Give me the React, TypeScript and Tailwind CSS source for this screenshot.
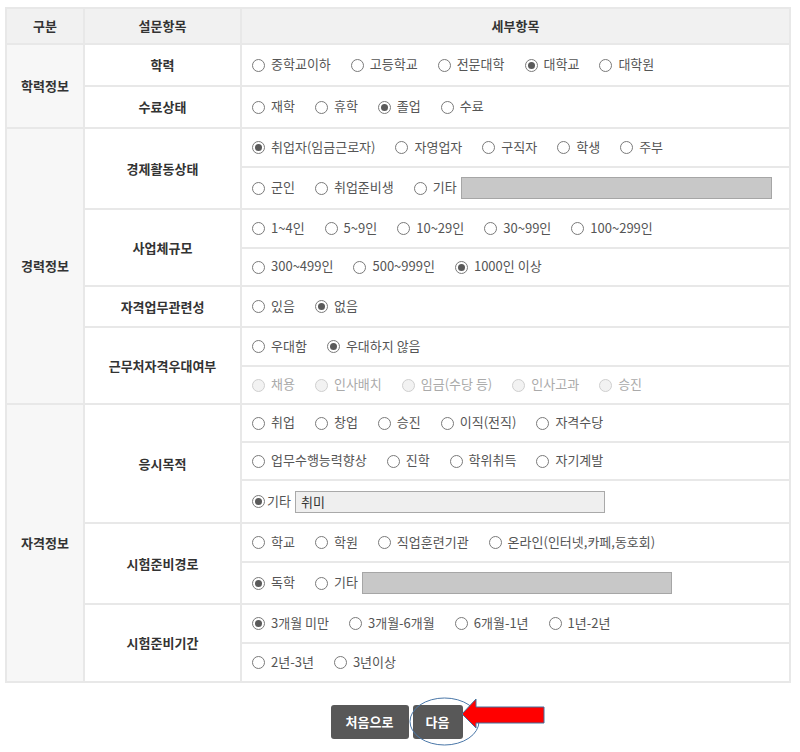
import React from "react";

type Opt = { l: string; c?: boolean; d?: boolean; tight?: boolean };

function Radio({ c, d }: { c?: boolean; d?: boolean }) {
  return (
    <span
      className={`relative inline-flex h-[13px] w-[13px] shrink-0 items-center justify-center rounded-full border ${
        d ? "border-[#cfcfcf] bg-[#f2f2f2]" : "border-[#7a7a7a] bg-white"
      }`}
    >
      {c && <span className="h-[7px] w-[7px] rounded-full bg-[#5a5a5a]" />}
    </span>
  );
}

function Option({ l, c, d, tight }: Opt) {
  return (
    <span className={`inline-flex items-center ${tight ? "gap-[2px]" : "gap-[6px]"}`}>
      <Radio c={c} d={d} />
      <span className={`leading-none -mt-[3px] ${d ? "text-[#aaaaaa]" : "text-[#555555]"}`}>{l}</span>
    </span>
  );
}

function Line({ opts, children }: { opts: Opt[]; children?: React.ReactNode }) {
  return (
    <div className="flex items-center gap-x-[20px]">
      {opts.map((o) => (
        <Option key={o.l} {...o} />
      ))}
      {children}
    </div>
  );
}

const td = "border-2 border-[#e8e8e8]";
const lab = `${td} text-center font-bold text-[#333333] bg-white`;
const grp = `${td} text-center font-bold text-[#333333] bg-[#f7f7f7]`;
const opt = `${td} pl-[10px] bg-white`;

export default function App() {
  return (
    <div
      className="relative h-[752px] w-[800px] bg-white text-[13px]"
      style={{ fontFamily: '"Noto Sans CJK KR", "Noto Sans", sans-serif' }}
    >
      <div className="pl-[5px] pt-[7px]">
        <table className="w-[786px] table-fixed border-collapse">
          <colgroup>
            <col className="w-[78px]" />
            <col className="w-[157px]" />
            <col />
          </colgroup>
          <thead>
            <tr className="h-[36px] bg-[#f1f1f1]">
              <th className={`${td} font-bold text-[#333333]`}>구분</th>
              <th className={`${td} font-bold text-[#333333]`}>설문항목</th>
              <th className={`${td} font-bold text-[#333333]`}>세부항목</th>
            </tr>
          </thead>
          <tbody>
            <tr className="h-[42px]">
              <td rowSpan={2} className={grp}>학력정보</td>
              <td className={lab}>학력</td>
              <td className={opt}>
                <Line opts={[{ l: "중학교이하" }, { l: "고등학교" }, { l: "전문대학" }, { l: "대학교", c: true }, { l: "대학원" }]} />
              </td>
            </tr>
            <tr className="h-[42px]">
              <td className={lab}>수료상태</td>
              <td className={opt}>
                <Line opts={[{ l: "재학" }, { l: "휴학" }, { l: "졸업", c: true }, { l: "수료" }]} />
              </td>
            </tr>

            <tr className="h-[39px]">
              <td rowSpan={7} className={grp}>경력정보</td>
              <td rowSpan={2} className={lab}>경제활동상태</td>
              <td className={opt}>
                <Line opts={[{ l: "취업자(임금근로자)", c: true }, { l: "자영업자" }, { l: "구직자" }, { l: "학생" }, { l: "주부" }]} />
              </td>
            </tr>
            <tr className="h-[42px]">
              <td className={opt}>
                <div className="flex items-center">
                  <Line opts={[{ l: "군인" }, { l: "취업준비생" }, { l: "기타" }]} />
                  <span className="ml-[4px] h-[22px] w-[311px] border border-[#a6a6a6] bg-[#c8c8c8]" />
                </div>
              </td>
            </tr>
            <tr className="h-[39px]">
              <td rowSpan={2} className={lab}>사업체규모</td>
              <td className={opt}>
                <Line opts={[{ l: "1~4인" }, { l: "5~9인" }, { l: "10~29인" }, { l: "30~99인" }, { l: "100~299인" }]} />
              </td>
            </tr>
            <tr className="h-[38px]">
              <td className={opt}>
                <Line opts={[{ l: "300~499인" }, { l: "500~999인" }, { l: "1000인 이상", c: true }]} />
              </td>
            </tr>
            <tr className="h-[41px]">
              <td className={lab}>자격업무관련성</td>
              <td className={opt}>
                <Line opts={[{ l: "있음" }, { l: "없음", c: true }]} />
              </td>
            </tr>
            <tr className="h-[39px]">
              <td rowSpan={2} className={lab}>근무처자격우대여부</td>
              <td className={opt}>
                <Line opts={[{ l: "우대함" }, { l: "우대하지 않음", c: true }]} />
              </td>
            </tr>
            <tr className="h-[38px]">
              <td className={opt}>
                <Line opts={[{ l: "채용", d: true }, { l: "인사배치", d: true }, { l: "임금(수당 등)", d: true }, { l: "인사고과", d: true }, { l: "승진", d: true }]} />
              </td>
            </tr>

            <tr className="h-[38px]">
              <td rowSpan={7} className={grp}>자격정보</td>
              <td rowSpan={3} className={lab}>응시목적</td>
              <td className={opt}>
                <Line opts={[{ l: "취업" }, { l: "창업" }, { l: "승진" }, { l: "이직(전직)" }, { l: "자격수당" }]} />
              </td>
            </tr>
            <tr className="h-[38px]">
              <td className={opt}>
                <Line opts={[{ l: "업무수행능력향상" }, { l: "진학" }, { l: "학위취득" }, { l: "자기계발" }]} />
              </td>
            </tr>
            <tr className="h-[43px]">
              <td className={opt}>
                <div className="flex items-center">
                  <Option l="기타" c tight />
                  <span className="ml-[4px] flex h-[22px] w-[310px] items-center border border-[#a9a9a9] bg-[#efefef] pl-[5px] text-[#333333]">
                    취미
                  </span>
                </div>
              </td>
            </tr>
            <tr className="h-[39px]">
              <td rowSpan={2} className={lab}>시험준비경로</td>
              <td className={opt}>
                <Line opts={[{ l: "학교" }, { l: "학원" }, { l: "직업훈련기관" }, { l: "온라인(인터넷,카페,동호회)" }]} />
              </td>
            </tr>
            <tr className="h-[42px]">
              <td className={opt}>
                <div className="flex items-center">
                  <Line opts={[{ l: "독학", c: true }, { l: "기타" }]} />
                  <span className="ml-[4px] h-[22px] w-[310px] border border-[#a6a6a6] bg-[#c8c8c8]" />
                </div>
              </td>
            </tr>
            <tr className="h-[39px]">
              <td rowSpan={2} className={lab}>시험준비기간</td>
              <td className={opt}>
                <Line opts={[{ l: "3개월 미만", c: true }, { l: "3개월-6개월" }, { l: "6개월-1년" }, { l: "1년-2년" }]} />
              </td>
            </tr>
            <tr className="h-[39px]">
              <td className={opt}>
                <Line opts={[{ l: "2년-3년" }, { l: "3년이상" }]} />
              </td>
            </tr>
          </tbody>
        </table>
      </div>

      <div className="mt-[22px] flex justify-center gap-[4px] pr-[7px]">
        <button className="h-[34px] w-[78px] rounded-[3px] bg-[#585858] text-[13px] font-bold text-white">처음으로</button>
        <button className="h-[34px] w-[50px] rounded-[3px] bg-[#585858] text-[13px] font-bold text-white">다음</button>
      </div>

      <svg className="pointer-events-none absolute left-0 top-0" width="800" height="752">
        <ellipse cx="444.5" cy="721.5" rx="34.5" ry="23.5" fill="none" stroke="#4a77a8" strokeWidth="1" />
        <polygon
          points="462,714 476,699 476,707 544,707 544,723 476,723 476,728"
          fill="#ff0000"
          stroke="#41719c"
          strokeWidth="1"
        />
      </svg>
    </div>
  );
}
